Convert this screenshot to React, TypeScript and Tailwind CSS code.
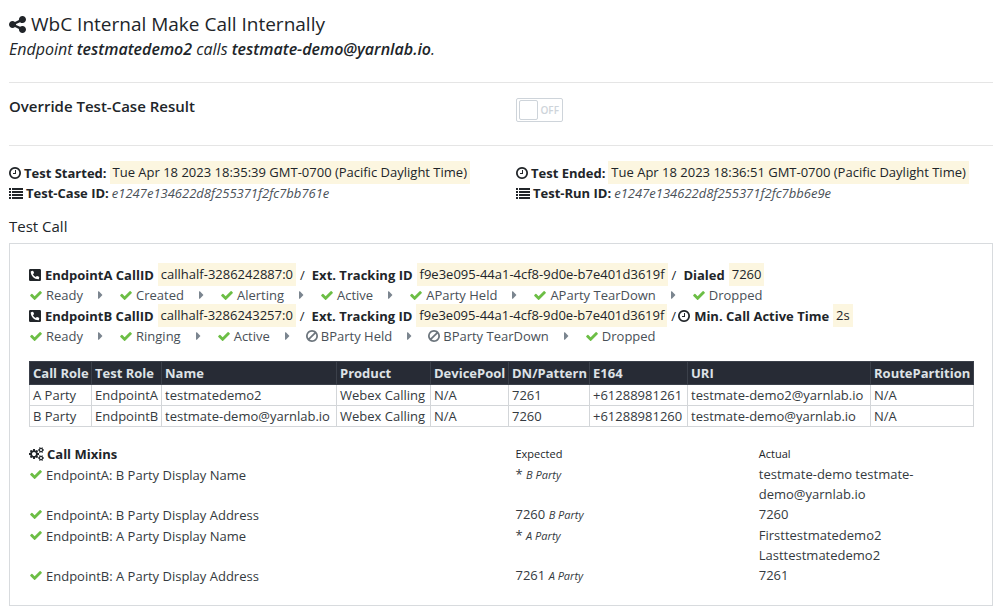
import React from "react";
import { FaCaretRight, FaPhoneSquareAlt } from "react-icons/fa";

type StepStatus = "passed" | "skipped";

type Step = {
  label: string;
  status: StepStatus;
};

const stepsA: Step[] = [
  { label: "Ready", status: "passed" },
  { label: "Created", status: "passed" },
  { label: "Alerting", status: "passed" },
  { label: "Active", status: "passed" },
  { label: "AParty Held", status: "passed" },
  { label: "AParty TearDown", status: "passed" },
  { label: "Dropped", status: "passed" },
];

const stepsB: Step[] = [
  { label: "Ready", status: "passed" },
  { label: "Ringing", status: "passed" },
  { label: "Active", status: "passed" },
  { label: "BParty Held", status: "skipped" },
  { label: "BParty TearDown", status: "skipped" },
  { label: "Dropped", status: "passed" },
];

const columns = [
  { title: "Call Role", width: "w-[62px]" },
  { title: "Test Role", width: "w-[70px]" },
  { title: "Name", width: "w-[175px]" },
  { title: "Product", width: "w-[94px]" },
  { title: "DevicePool", width: "w-[78px]" },
  { title: "DN/Pattern", width: "w-[81px]" },
  { title: "E164", width: "w-[98px]" },
  { title: "URI", width: "w-[183px]" },
  { title: "RoutePartition", width: "w-[103px]" },
];

const parties = [
  ["A Party", "EndpointA", "testmatedemo2", "Webex Calling", "N/A", "7261", "+61288981261", "testmate-demo2@yarnlab.io", "N/A"],
  ["B Party", "EndpointB", "testmate-demo@yarnlab.io", "Webex Calling", "N/A", "7260", "+61288981260", "testmate-demo@yarnlab.io", "N/A"],
];

const mixins = [
  { name: "EndpointA: B Party Display Name", expected: "*", party: "B Party", actual: "testmate-demo testmate-demo@yarnlab.io" },
  { name: "EndpointA: B Party Display Address", expected: "7260", party: "B Party", actual: "7260" },
  { name: "EndpointB: A Party Display Name", expected: "*", party: "A Party", actual: "Firsttestmatedemo2 Lasttestmatedemo2" },
  { name: "EndpointB: A Party Display Address", expected: "7261", party: "A Party", actual: "7261" },
];

const ShareIcon = () => (
  <svg viewBox="128 128 1536 1536" fill="currentColor" className="w-[17px] h-[17px] shrink-0" aria-hidden="true">
    <path d="M1344 1024q133 0 226.5 93.5t93.5 226.5-93.5 226.5-226.5 93.5-226.5-93.5-93.5-226.5q0-12 2-34l-360-180q-92 86-218 86-133 0-226.5-93.5t-93.5-226.5 93.5-226.5 226.5-93.5q126 0 218 86l360-180q-2-22-2-34 0-133 93.5-226.5t226.5-93.5 226.5 93.5 93.5 226.5-93.5 226.5-226.5 93.5q-126 0-218-86l-360 180q2 22 2 34t-2 34l360 180q92-86 218-86z" />
  </svg>
);

const ClockIcon = () => (
  <svg viewBox="128 128 1536 1536" fill="currentColor" className="w-3 h-3 shrink-0" aria-hidden="true">
    <path d="M1024 544v448q0 14-9 23t-23 9h-320q-14 0-23-9t-9-23v-64q0-14 9-23t23-9h224v-352q0-14 9-23t23-9h64q14 0 23 9t9 23zm416 352q0-148-73-273t-198-198-273-73-273 73-198 198-73 273 73 273 198 198 273 73 273-73 198-198 73-273zm224 0q0 209-103 385.5t-279.5 279.5-385.5 103-385.5-103-279.5-279.5-103-385.5 103-385.5 279.5-279.5 385.5-103 385.5 103 279.5 279.5 103 385.5z" />
  </svg>
);

const ListIcon = () => (
  <svg viewBox="0 0 14 11" fill="currentColor" className="w-3.5 h-[11px] shrink-0" aria-hidden="true">
    <path d="M0 0h2v2H0zM3 0h11v2H3zM0 3h2v2H0zM3 3h11v2H3zM0 6h2v2H0zM3 6h11v2H3zM0 9h2v2H0zM3 9h11v2H3z" />
  </svg>
);

const CogsIcon = () => (
  <svg viewBox="0 0 1920 1792" fill="currentColor" className="w-[15px] h-3.5 shrink-0" aria-hidden="true">
    <path d="M896 896q0-106-75-181t-181-75-181 75-75 181 75 181 181 75 181-75 75-181zm768 512q0-52-38-90t-90-38-90 38-38 90q0 53 37.5 90.5t90.5 37.5 90.5-37.5 37.5-90.5zm0-1024q0-52-38-90t-90-38-90 38-38 90q0 53 37.5 90.5t90.5 37.5 90.5-37.5 37.5-90.5zm-384 421v185q0 10-7 19.5t-16 10.5l-155 24q-11 35-32 76 34 48 90 115 7 11 7 20 0 12-7 19-23 30-82.5 89.5t-78.5 59.5q-11 0-21-7l-115-90q-37 19-77 31-11 108-23 155-7 24-30 24h-186q-11 0-20-7.5t-10-17.5l-23-153q-34-10-75-31l-118 89q-7 7-20 7-11 0-21-8-144-133-144-160 0-9 7-19 10-14 41-53t47-61q-23-44-35-82l-152-24q-10-1-17-9.5t-7-19.5v-185q0-10 7-19.5t16-10.5l155-24q11-35 32-76-34-48-90-115-7-11-7-20 0-12 7-20 22-30 82-89t79-59q11 0 21 7l115 90q34-18 77-32 11-108 23-154 7-24 30-24h186q11 0 20 7.5t10 17.5l23 153q34 10 75 31l118-89q8-7 20-7 11 0 21 8 144 133 144 160 0 8-7 19-12 16-42 54t-45 60q23 48 34 82l152 23q10 2 17 10.5t7 19.5zm640 533v140q0 16-149 31-12 27-30 52 51 113 51 138 0 4-4 7-122 71-124 71-8 0-46-47t-52-68q-20 2-30 2t-30-2q-14 21-52 68t-46 47q-2 0-124-71-4-3-4-7 0-25 51-138-18-25-30-52-149-15-149-31v-140q0-16 149-31 13-29 30-52-51-113-51-138 0-4 4-7 4-2 35-20t59-34 30-16q8 0 46 46.5t52 67.5q20-2 30-2t30 2q51-71 92-112l6-2q4 0 124 70 4 3 4 7 0 25-51 138 17 23 30 52 149 15 149 31zm0-1024v140q0 16-149 31-12 27-30 52 51 113 51 138 0 4-4 7-122 71-124 71-8 0-46-47t-52-68q-20 2-30 2t-30-2q-14 21-52 68t-46 47q-2 0-124-71-4-3-4-7 0-25 51-138-18-25-30-52-149-15-149-31v-140q0-16 149-31 13-29 30-52-51-113-51-138 0-4 4-7 4-2 35-20t59-34 30-16q8 0 46 46.5t52 67.5q20-2 30-2t30 2q51-71 92-112l6-2q4 0 124 70 4 3 4 7 0 25-51 138 17 23 30 52 149 15 149 31z" />
  </svg>
);

const CheckIcon = () => (
  <svg viewBox="121 334 1550 1188" fill="currentColor" className="w-3 h-[9px] shrink-0 text-[#6cbe45]" aria-hidden="true">
    <path d="M1671 566q0 40-28 68l-724 724-136 136q-28 28-68 28t-68-28l-136-136-362-362q-28-28-28-68t28-68l136-136q28-28 68-28t68 28l294 295 656-657q28-28 68-28t68 28l136 136q28 28 28 68z" />
  </svg>
);

const BanIcon = () => (
  <svg viewBox="128 123 1536 1541" fill="currentColor" className="w-3 h-3 shrink-0 text-[#6c757d]" aria-hidden="true">
    <path d="M1440 893q0-161-87-295l-754 753q137 89 297 89 111 0 211.5-43.5t173.5-116.5 116-174.5 43-212.5zm-999 299l755-754q-135-91-300-91-148 0-273 73t-198 199-73 274q0 162 89 299zm1223-299q0 157-61 300t-163.5 246-245 164-298.5 61-298.5-61-245-164-163.5-246-61-300 61-299.5 163.5-245.5 245-164 298.5-61 298.5 61 245 164 163.5 245.5 61 299.5z" />
  </svg>
);

const Mark = ({ children }: { children: React.ReactNode }) => (
  <span className="bg-[#fcf6e0] px-[3px] h-[23px] leading-[23px] -my-px">{children}</span>
);

const Steps = ({ steps }: { steps: Step[] }) => (
  <ol className="flex items-center h-5 text-[#495057]">
    {steps.map((step, index) => (
      <li key={step.label} className="flex items-center">
        {index > 0 && (
          <FaCaretRight className="w-[5px] h-3.5 ml-[15px] mr-4 text-[#7b858f]" />
        )}
        <span className={step.status === "passed" ? "flex items-center gap-1 pl-px" : "flex items-center gap-[3px]"}>
          {step.status === "passed" ? <CheckIcon /> : <BanIcon />}
          {step.label}
        </span>
      </li>
    ))}
  </ol>
);

const App = () => {
  return (
    <main className="bg-white pl-[9px] pr-[7px] pt-3 pb-1 text-[13px] leading-5 text-[#212529] font-['Open_Sans','Noto_Sans',sans-serif]">
      <h1 className="flex items-center gap-[5px] text-[19px] leading-6 font-normal">
        <ShareIcon />
        WbC Internal Make Call Internally
      </h1>
      <p className="mt-px text-[16px] leading-6 italic">
        Endpoint <b className="font-semibold">testmatedemo2</b> calls{" "}
        <b className="font-semibold">testmate-demo@yarnlab.io</b>.
      </p>
      <hr className="mt-[21px] border-[#e5e5e5]" />

      <div className="grid grid-cols-2 gap-x-[30px] pt-[15px] pb-[23px]">
        <h2 id="override" className="text-[15px] leading-4 font-semibold">
          Override Test-Case Result
        </h2>
        <label className="flex items-center justify-between w-[47px] h-6 px-0.5 border border-[#ced4da] rounded-[2px] text-[10px] font-semibold text-[#ced4da] cursor-pointer">
          <input
            type="checkbox"
            role="switch"
            aria-labelledby="override"
            className="appearance-none w-[19px] h-5 border border-[#ced4da] rounded-[2px] bg-white"
          />
          <span className="pr-px">OFF</span>
        </label>
      </div>
      <hr className="border-[#e5e5e5]" />

      <div className="grid grid-cols-2 gap-x-[30px] mt-4">
        <div>
          <p className="flex items-center gap-[3px] h-[21px]">
            <ClockIcon /> <b className="font-bold">Test Started:</b>
            <Mark>Tue Apr 18 2023 18:35:39 GMT-0700 (Pacific Daylight Time)</Mark>
          </p>
          <p className="flex items-center gap-[3px] h-5">
            <ListIcon /> <b className="font-bold">Test-Case ID:</b>
            <i className="text-[#495057]">e1247e134622d8f255371f2fc7bb761e</i>
          </p>
        </div>
        <div>
          <p className="flex items-center gap-[3px] h-[21px]">
            <ClockIcon /> <b className="font-bold">Test Ended:</b>
            <Mark>Tue Apr 18 2023 18:36:51 GMT-0700 (Pacific Daylight Time)</Mark>
          </p>
          <p className="flex items-center gap-[3px] h-5">
            <ListIcon /> <b className="font-bold">Test-Run ID:</b>
            <i className="text-[#495057]">e1247e134622d8f255371f2fc7bb6e9e</i>
          </p>
        </div>
      </div>

      <h2 className="mt-[13px] text-[15px] leading-5 font-normal">Test Call</h2>

      <section className="mt-[7px] pl-[19px] pr-5 pt-5 pb-[19px] border border-[#d8dbde]">
        <p className="flex items-center gap-1 h-[21px]">
          <FaPhoneSquareAlt className="w-3 h-3.5" /> <b className="font-bold">EndpointA CallID</b>
          <Mark>callhalf-3286242887:0</Mark>
          <span className="pr-[3px]">/</span>
          <b className="font-bold">Ext. Tracking ID</b>
          <Mark>f9e3e095-44a1-4cf8-9d0e-b7e401d3619f</Mark>
          <span className="pr-[3px]">/</span>
          <b className="font-bold">Dialed</b>
          <Mark>7260</Mark>
        </p>
        <Steps steps={stepsA} />
        <p className="flex items-center gap-1 h-[21px]">
          <FaPhoneSquareAlt className="w-3 h-3.5" /> <b className="font-bold">EndpointB CallID</b>
          <Mark>callhalf-3286243257:0</Mark>
          <span className="pr-[3px]">/</span>
          <b className="font-bold">Ext. Tracking ID</b>
          <Mark>f9e3e095-44a1-4cf8-9d0e-b7e401d3619f</Mark>
          <span className="flex items-center gap-0.5">
            / <ClockIcon />
          </span>
          <b className="font-bold">Min. Call Active Time</b>
          <Mark>2s</Mark>
        </p>
        <Steps steps={stepsB} />

        <table className="w-full mt-[15px] table-fixed border-collapse text-left whitespace-nowrap">
          <thead className="bg-[#272b35] text-[#dee2e6]">
            <tr>
              {columns.map((column) => (
                <th
                  key={column.title}
                  scope="col"
                  className={`${column.width} h-[23px] px-[3px] border border-[#3b404a] leading-5 font-bold`}
                >
                  {column.title}
                </th>
              ))}
            </tr>
          </thead>
          <tbody className="text-[#343a40]">
            {parties.map((party) => (
              <tr key={party[0]}>
                {party.map((value, index) => (
                  <td key={index} className="h-[21px] px-[3px] border border-[#d3d6d9] leading-5">
                    {value}
                  </td>
                ))}
              </tr>
            ))}
          </tbody>
        </table>

        <div className="mt-4 grid grid-cols-4 gap-x-[30px]">
          <h3 className="col-span-2 flex items-center gap-[3px] h-[21px] font-bold">
            <CogsIcon /> Call Mixins
          </h3>
          <span className="text-[11px] leading-[22px] h-5">Expected</span>
          <span className="text-[11px] leading-[22px] h-5">Actual</span>
          {mixins.map((mixin) => (
            <React.Fragment key={mixin.name}>
              <p className="col-span-2 flex items-center gap-1 h-[21px] pl-px text-[#343a40]">
                <CheckIcon /> {mixin.name}
              </p>
              <p className="text-[#343a40]">
                {mixin.expected} <i className="text-[11px]">{mixin.party}</i>
              </p>
              <p className="text-[#343a40]">{mixin.actual}</p>
            </React.Fragment>
          ))}
        </div>
      </section>
    </main>
  );
};

export default App;
